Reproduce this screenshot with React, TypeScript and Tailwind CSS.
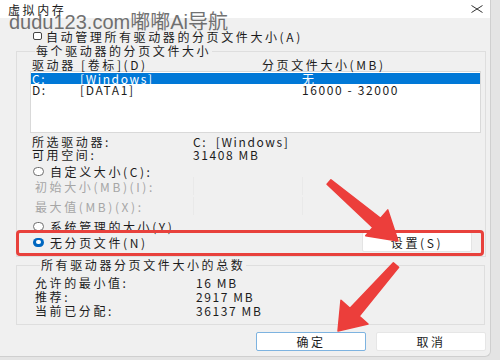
import React from "react";

function Arrow({ x1, y1, x2, y2, w0, w1, hl, hw }: { x1: number; y1: number; x2: number; y2: number; w0: number; w1: number; hl: number; hw: number }) {
  const dx = x2 - x1, dy = y2 - y1;
  const L = Math.hypot(dx, dy);
  const ux = dx / L, uy = dy / L;
  const px = -uy, py = ux;
  const bx = x2 - ux * hl, by = y2 - uy * hl;
  const pts = [
    [x1 + (px * w0) / 2, y1 + (py * w0) / 2],
    [bx + (px * w1) / 2, by + (py * w1) / 2],
    [bx + px * hw, by + py * hw],
    [x2, y2],
    [bx - px * hw, by - py * hw],
    [bx - (px * w1) / 2, by - (py * w1) / 2],
    [x1 - (px * w0) / 2, y1 - (py * w0) / 2],
  ];
  return <polygon points={pts.map((p) => p.join(",")).join(" ")} fill="#ec3e3b" stroke="#ec3e3b" strokeWidth={1.5} strokeLinejoin="round" />;
}

function Radio({ checked }: { checked?: boolean }) {
  return checked ? (
    <span className="inline-flex w-[11px] h-[9px] rounded-full bg-[#0067c0] items-center justify-center shrink-0">
      <span className="w-[5px] h-[4px] rounded-full bg-white" />
    </span>
  ) : (
    <span className="inline-block w-[11px] h-[9px] rounded-full border border-[#6e6e6e] bg-white shrink-0" />
  );
}

const cj = "tracking-[2.6px]";
const la = "tracking-[1.6px]";

export default function App() {
  const font = { fontFamily: '"Noto Sans CJK SC", "Noto Sans", sans-serif' };
  return (
    <div className="relative w-[500px] h-[360px] bg-[#e4e4e4] overflow-hidden text-[12px] leading-[13px] text-[#1c1c1c]" style={font}>
      <div className="w-[491px] h-[357px] bg-[#f0f0f0] border-r border-b border-[#cfcfcf] rounded-br-[6px] flex flex-col">
        {/* title bar */}
        <div className="h-[18px] bg-white flex items-center justify-between pl-[8px] pr-[7px] shrink-0">
          <span className={cj}>虚拟内存</span>
          <svg width="12" height="8" viewBox="0 0 12 8">
            <path d="M0.5 0.5 L11.5 7.5 M11.5 0.5 L0.5 7.5" stroke="#333" strokeWidth="1" />
          </svg>
        </div>

        <div className="flex flex-col pl-[16px] pr-[4px]">
          {/* auto manage checkbox */}
          <div className="flex items-center gap-[4px] pl-[17px] mt-[11px] h-[14px]">
            <span className="inline-block w-[9px] h-[8px] border border-[#444] rounded-[2px] bg-white" />
            <span className={cj}>自动管理所有驱动器的分页文件大小(A)</span>
          </div>

          {/* group 1 */}
          <fieldset className="border border-[#dedede] mt-[1px] pl-[13px] pr-[4px] pb-[4px]">
            <legend className={`ml-[5px] px-[1px] h-[14px] leading-[14px] ${cj}`}>每个驱动器的分页文件大小</legend>
            <div className="flex h-[13px] items-center">
              <span className={`w-[232px] pl-[2px] ${cj}`}>驱动器 [卷标](D)</span>
              <span className={cj}>分页文件大小(MB)</span>
            </div>
            <div className="bg-white border border-[#d9d9d9] h-[62px] pt-[1px]">
              <div className="flex bg-[#0078d7] text-white h-[11px] items-center leading-[11px]">
                <span className={`w-[49px] pl-[1px] ${la}`}>C:</span>
                <span className={`w-[222px] ${la}`}>[Windows]</span>
                <span className={cj}>无</span>
              </div>
              <div className="flex h-[11px] items-center leading-[11px]">
                <span className={`w-[49px] pl-[1px] ${la}`}>D:</span>
                <span className={`w-[222px] ${la}`}>[DATA1]</span>
                <span className={la}>16000 - 32000</span>
              </div>
            </div>
            <div className="flex mt-[2px] pl-[2px]">
              <div className="w-[161px] flex flex-col">
                <span className={`h-[13px] ${cj}`}>所选驱动器:</span>
                <span className={`h-[13px] ${cj}`}>可用空间:</span>
              </div>
              <div className="flex flex-col">
                <span className={`h-[13px] ${la}`}>C:&nbsp;&nbsp;[Windows]</span>
                <span className={`h-[13px] ${la}`}>31408 MB</span>
              </div>
            </div>
            <div className="flex items-center gap-[6px] mt-[3px] pl-[3px] h-[14px]">
              <Radio />
              <span className={cj}>自定义大小(C):</span>
            </div>
            <div className="flex items-center mt-[-1px] pl-[5px] text-[#a6a6a6] h-[18px]">
              <span className={`w-[158px] ${cj}`}>初始大小(MB)(I):</span>
              <span className="w-[110px] h-[18px] border-x border-[#e9e9e9]" />
            </div>
            <div className="flex items-center mt-[2px] pl-[5px] text-[#a6a6a6] h-[18px]">
              <span className={`w-[158px] ${cj}`}>最大值(MB)(X):</span>
              <span className="w-[110px] h-[18px] border-x border-[#e9e9e9]" />
            </div>
            <div className="flex items-center gap-[6px] mt-[4px] pl-[3px] h-[14px]">
              <Radio />
              <span className={cj}>系统管理的大小(Y)</span>
            </div>
            <div className="flex items-center justify-between mt-[-1px] h-[20px] pl-[3px] pr-[9px]">
              <div className="flex items-center gap-[6px]">
                <Radio checked />
                <span className={cj}>无分页文件(N)</span>
              </div>
              <button className={`w-[110px] h-[20px] bg-white border border-[#e4e4e4] rounded-[2px] text-[12px] ${cj}`}>设置(S)</button>
            </div>
          </fieldset>

          {/* group 2 */}
          <fieldset className="border border-[#dedede] mt-[1px] mr-[1px] pl-[18px] pt-[4px] pb-[6px]">
            <legend className={`ml-[5px] px-[1px] h-[14px] leading-[14px] ${cj}`}>所有驱动器分页文件大小的总数</legend>
            <div className="flex">
              <div className="w-[161px] flex flex-col">
                <span className={`h-[14px] ${cj}`}>允许的最小值:</span>
                <span className={`h-[14px] ${cj}`}>推荐:</span>
                <span className={`h-[14px] ${cj}`}>当前已分配:</span>
              </div>
              <div className="flex flex-col">
                <span className={`h-[14px] ${la}`}>16 MB</span>
                <span className={`h-[14px] ${la}`}>2917 MB</span>
                <span className={`h-[14px] ${la}`}>36137 MB</span>
              </div>
            </div>
          </fieldset>

          <div className="flex justify-end gap-[10px] mt-[7px]">
            <button className={`w-[110px] h-[19px] bg-white border border-[#7db3e0] rounded-[2px] text-[12px] ${cj}`}>确定</button>
            <button className={`w-[110px] h-[19px] bg-white border border-[#e6e6e6] rounded-[2px] text-[12px] ${cj}`}>取消</button>
          </div>
        </div>
      </div>

      {/* red annotation box */}
      <div className="absolute left-[16px] top-[230px] w-[468px] h-[26px] border-[3px] border-[#e8413c] rounded-[4px] pointer-events-none" />

      {/* watermark */}
      <div
        className="absolute left-[9px] top-[10px] text-[20px] leading-[24px] text-[#505050] opacity-80 pointer-events-none"
        style={{ fontFamily: '"Liberation Sans", "Noto Sans CJK SC", sans-serif' }}
      >
        dudu123.com嘟嘟Ai导航
      </div>

      <svg className="absolute left-0 top-0 pointer-events-none" width={500} height={360}>
        <Arrow x1={329} y1={182} x2={398} y2={241} w0={6} w1={12} hl={28} hw={17} />
        <Arrow x1={396} y1={265} x2={338} y2={331} w0={7} w1={12} hl={25} hw={18} />
      </svg>
    </div>
  );
}
